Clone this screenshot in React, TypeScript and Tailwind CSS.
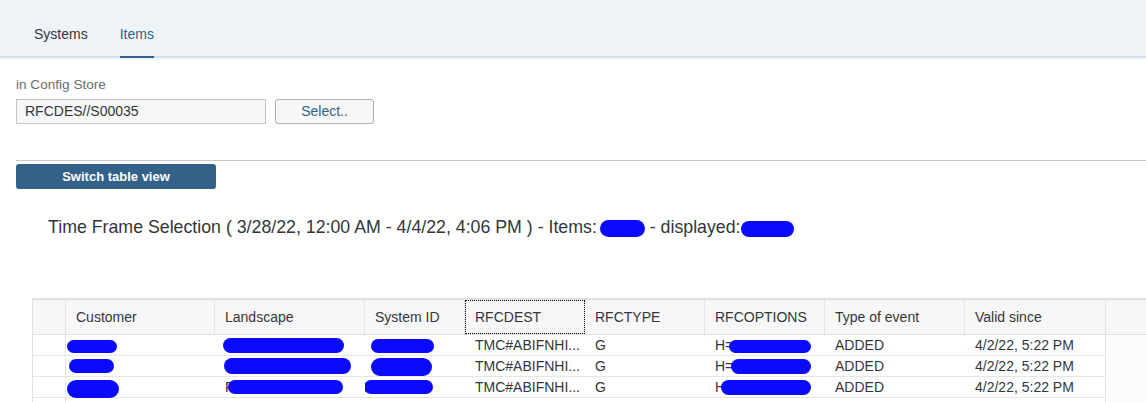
import React from 'react'

type Blob = { l: number; t: number; w: number; h: number }

const cols = [
  { key: 'sel', label: '' },
  { key: 'customer', label: 'Customer' },
  { key: 'landscape', label: 'Landscape' },
  { key: 'system', label: 'System ID' },
  { key: 'rfcdest', label: 'RFCDEST' },
  { key: 'rfctype', label: 'RFCTYPE' },
  { key: 'rfcoptions', label: 'RFCOPTIONS' },
  { key: 'event', label: 'Type of event' },
  { key: 'valid', label: 'Valid since' },
]

// redaction scribbles, offsets are relative to each cell
const rows: { blobs: Record<string, Blob>; text: Record<string, string> }[] = [
  {
    text: { landscape: 'F.......................', system: 'P...LFP', rfcoptions: 'H=...........S...' },
    blobs: {
      customer: { l: 1, t: 5, w: 50, h: 13 },
      landscape: { l: 8, t: 3, w: 121, h: 15 },
      system: { l: 6, t: 4, w: 63, h: 14 },
      rfcoptions: { l: 24, t: 5, w: 82, h: 13 },
    },
  },
  {
    text: { landscape: 'F.......................', system: 'P...', rfcoptions: 'H=...........S...' },
    blobs: {
      customer: { l: 3, t: 3, w: 45, h: 14 },
      landscape: { l: 9, t: 2, w: 127, h: 16 },
      system: { l: 6, t: 2, w: 61, h: 18 },
      rfcoptions: { l: 26, t: 3, w: 80, h: 15 },
    },
  },
  {
    text: { landscape: 'F.......................', system: 'P...', rfcoptions: 'H=...........S...' },
    blobs: {
      customer: { l: 1, t: 3, w: 52, h: 18 },
      landscape: { l: 13, t: 3, w: 115, h: 14 },
      system: { l: -1, t: 3, w: 69, h: 14 },
      rfcoptions: { l: 16, t: 3, w: 90, h: 15 },
    },
  },
]

function Redact({ b }: { b: Blob }) {
  return (
    <span
      className="absolute rounded-full bg-[#0a0aff]"
      style={{ left: b.l, top: b.t, width: b.w, height: b.h }}
    />
  )
}

export default function App() {
  return (
    <div className="min-h-[402px] bg-white text-[#32363a] font-['Liberation_Sans',Arial,sans-serif] overflow-hidden">
      {/* tab bar */}
      <div className="h-[58px] bg-[#eef3f8] border-b-2 border-[#d3e2f0] flex pl-[34px] gap-[32px] text-[14px]">
        <div className="flex items-center pt-[12px]">Systems</div>
        <div className="flex items-center pt-[12px] -mb-[2px] border-b-2 border-[#346187] text-[#346187]">
          Items
        </div>
      </div>
      <div className="h-[2px] bg-[#f5f8fb]" />

      <div className="pl-[16px]">
        <div className="mt-[17px] text-[13.6px] leading-[16px] text-[#6a6d70]">in Config Store</div>
        <div className="mt-[6px] flex gap-[9px]">
          <div className="w-[250px] h-[25px] border border-[#c4c4c4] bg-[#f7f7f7] pl-[8px] flex items-center text-[14px]">
            RFCDES//S00035
          </div>
          <button className="w-[99px] h-[25px] border border-[#adb1b5] rounded-[3px] bg-[#f7f7f7] text-[14px] text-[#346187]">
            Select..
          </button>
        </div>

        <div className="mt-[36px] h-px bg-[#c8c8c8]" />
        <button className="mt-[3px] w-[200px] h-[25px] rounded-[3px] bg-[#346187] text-white text-[13px] font-bold">
          Switch table view
        </button>

        <div className="mt-[26px] ml-[32px] text-[17.75px] leading-[24px] text-[#32363a] flex items-center whitespace-nowrap">
          <span>Time Frame Selection ( 3/28/22, 12:00 AM - 4/4/22, 4:06 PM ) - Items:</span>
          <span className="inline-block w-[45px] h-[17px] ml-[3px] rounded-full bg-[#0a0aff] mt-[2px]" />
          <span>&nbsp;- displayed:</span>
          <span className="inline-block w-[53px] h-[16px] rounded-full bg-[#0a0aff] mt-[4px]" />
        </div>

        {/* table */}
        <div className="mt-[59px] ml-[16px] border-t-2 border-l border-[#e0e0e0] text-[14px]">
          <div className="grid grid-cols-[33px_149px_150px_100px_120px_120px_120px_140px_141px_1fr] h-[35px] bg-[#f7f7f7] border-b border-[#e0e0e0]">
            {cols.map(c => (
              <div
                key={c.key}
                className={
                  c.key === 'rfcdest'
                    ? 'flex items-center pl-[9px] border border-dotted border-black'
                    : 'flex items-center pl-[10px] border-r border-[#e5e5e5]'
                }
              >
                {c.label}
              </div>
            ))}
            <div />
          </div>
          {rows.map((r, i) => (
            <div
              key={i}
              className="grid grid-cols-[33px_149px_150px_100px_120px_120px_120px_140px_141px_1fr] h-[21px]"
            >
              <div className="border-r border-b border-[#e5e5e5]" />
              <div className="relative border-b border-[#e5e5e5] pl-[10px] leading-[20px]">
                {r.blobs.customer && <Redact b={r.blobs.customer} />}
              </div>
              <div className="relative border-b border-[#e5e5e5] pl-[10px] leading-[20px] truncate text-[#32363a]">
                {r.text.landscape}
                <Redact b={r.blobs.landscape} />
              </div>
              <div className="relative border-b border-[#e5e5e5] pl-[10px] leading-[20px] truncate">
                {r.text.system}
                <Redact b={r.blobs.system} />
              </div>
              <div className="border-b border-[#e5e5e5] pl-[10px] leading-[20px]">TMC#ABIFNHI...</div>
              <div className="border-b border-[#e5e5e5] pl-[10px] leading-[20px]">G</div>
              <div className="relative border-b border-[#e5e5e5] pl-[10px] leading-[20px] truncate">
                {r.text.rfcoptions}
                <Redact b={r.blobs.rfcoptions} />
              </div>
              <div className="border-b border-[#e5e5e5] pl-[10px] leading-[20px]">ADDED</div>
              <div className="border-b border-r border-[#e5e5e5] pl-[10px] leading-[20px]">4/2/22, 5:22 PM</div>
              <div className="bg-[#fcfcfc]" />
            </div>
          ))}
          <div className="grid grid-cols-[33px_149px_150px_100px_120px_120px_120px_140px_141px_1fr] h-[21px]">
            <div className="border-r border-[#e5e5e5]" />
            <div className="col-span-8 border-r border-[#e5e5e5]" />
            <div className="bg-[#fcfcfc]" />
          </div>
        </div>
      </div>
    </div>
  )
}
